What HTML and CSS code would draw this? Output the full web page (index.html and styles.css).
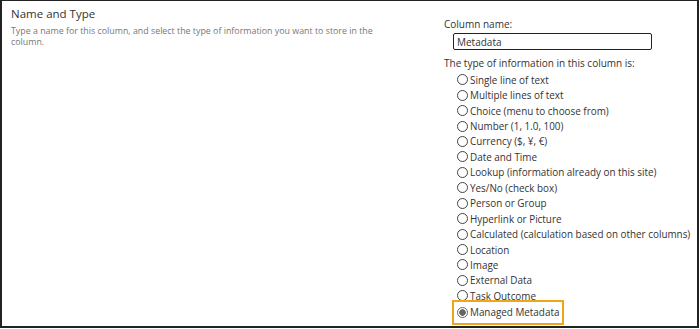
FILE: index.html
```html
<!DOCTYPE html>
<html lang="en">
<head>
    <meta charset="UTF-8">
    <meta name="viewport" content="width=device-width, initial-scale=1.0">
    <title>Name and Type</title>
    <link rel="stylesheet" href="styles.css">
</head>
<body>
<div class="frame">
    <div class="section-left">
        <h3>Name and Type</h3>
        <p>Type a name for this column, and select the type of information you want to store in the column.</p>
    </div>
    <div class="section-right">
        <div class="label">Column name:</div>
        <input type="text" class="name-input" value="Metadata">
        <div class="label">The type of information in this column is:</div>
        <div class="types">
            <label class="type"><span class="radio"></span>Single line of text</label>
            <label class="type"><span class="radio"></span>Multiple lines of text</label>
            <label class="type"><span class="radio"></span>Choice (menu to choose from)</label>
            <label class="type"><span class="radio"></span>Number (1, 1.0, 100)</label>
            <label class="type"><span class="radio"></span>Currency ($, ¥, €)</label>
            <label class="type"><span class="radio"></span>Date and Time</label>
            <label class="type"><span class="radio"></span>Lookup (information already on this site)</label>
            <label class="type"><span class="radio"></span>Yes/No (check box)</label>
            <label class="type"><span class="radio"></span>Person or Group</label>
            <label class="type"><span class="radio"></span>Hyperlink or Picture</label>
            <label class="type"><span class="radio"></span>Calculated (calculation based on other columns)</label>
            <label class="type"><span class="radio"></span>Location</label>
            <label class="type"><span class="radio"></span>Image</label>
            <label class="type"><span class="radio"></span>External Data</label>
            <label class="type"><span class="radio"></span>Task Outcome</label>
            <label class="type selected"><span class="radio checked"></span>Managed Metadata</label>
        </div>
    </div>
</div>
</body>
</html>
```

FILE: styles.css
```css
body {
    margin: 0;
    background: #FFFFFF;
    font-family: 'Open Sans', 'Noto Sans', sans-serif;
    color: #333333;
}

.frame {
    box-sizing: border-box;
    width: 699px;
    height: 328px;
    border: 2px solid #222222;
    border-top-width: 1px;
    display: flex;
    overflow: hidden;
}

.section-left {
    flex: none;
    width: 384px;
    padding: 5px 0 0 9px;
}

.section-left h3 {
    margin: 0;
    font-size: 11.5px;
    font-weight: 400;
    color: #333333;
    line-height: 16px;
}

.section-left p {
    margin: 4px 0 0;
    font-size: 8.85px;
    line-height: 11px;
    color: #777777;
}

.section-right {
    flex: none;
    padding: 16px 0 0 49px;
}

.label {
    font-size: 10px;
    line-height: 14px;
    color: #333333;
}

.name-input {
    box-sizing: border-box;
    display: block;
    width: 199px;
    height: 17px;
    margin: 2px 0 6px 9px;
    padding: 0 3px;
    border: 1.5px solid #222222;
    border-radius: 2px;
    font-family: 'Open Sans', 'Noto Sans', sans-serif;
    font-size: 10px;
    color: #333333;
    outline: none;
}

.types {
    margin-top: 2px;
    padding-left: 13px;
}

.type {
    display: flex;
    align-items: center;
    height: 15.45px;
    font-size: 9.9px;
    color: #333333;
    white-space: nowrap;
}

.radio {
    box-sizing: border-box;
    width: 11px;
    height: 11px;
    margin-right: 2px;
    border: 1px solid #444444;
    border-radius: 50%;
    flex-shrink: 0;
}

.radio.checked {
    border-color: #666666;
    background: radial-gradient(circle, #666666 0 3px, #FFFFFF 3.5px);
}

.selected {
    position: relative;
    width: max-content;
    height: 15px;
    margin: -4px 0 0 -5px;
    padding: 3px 3px 3px 3px;
    border: 2px solid #F2A516;
    background: #FFFFFF;
}
```
